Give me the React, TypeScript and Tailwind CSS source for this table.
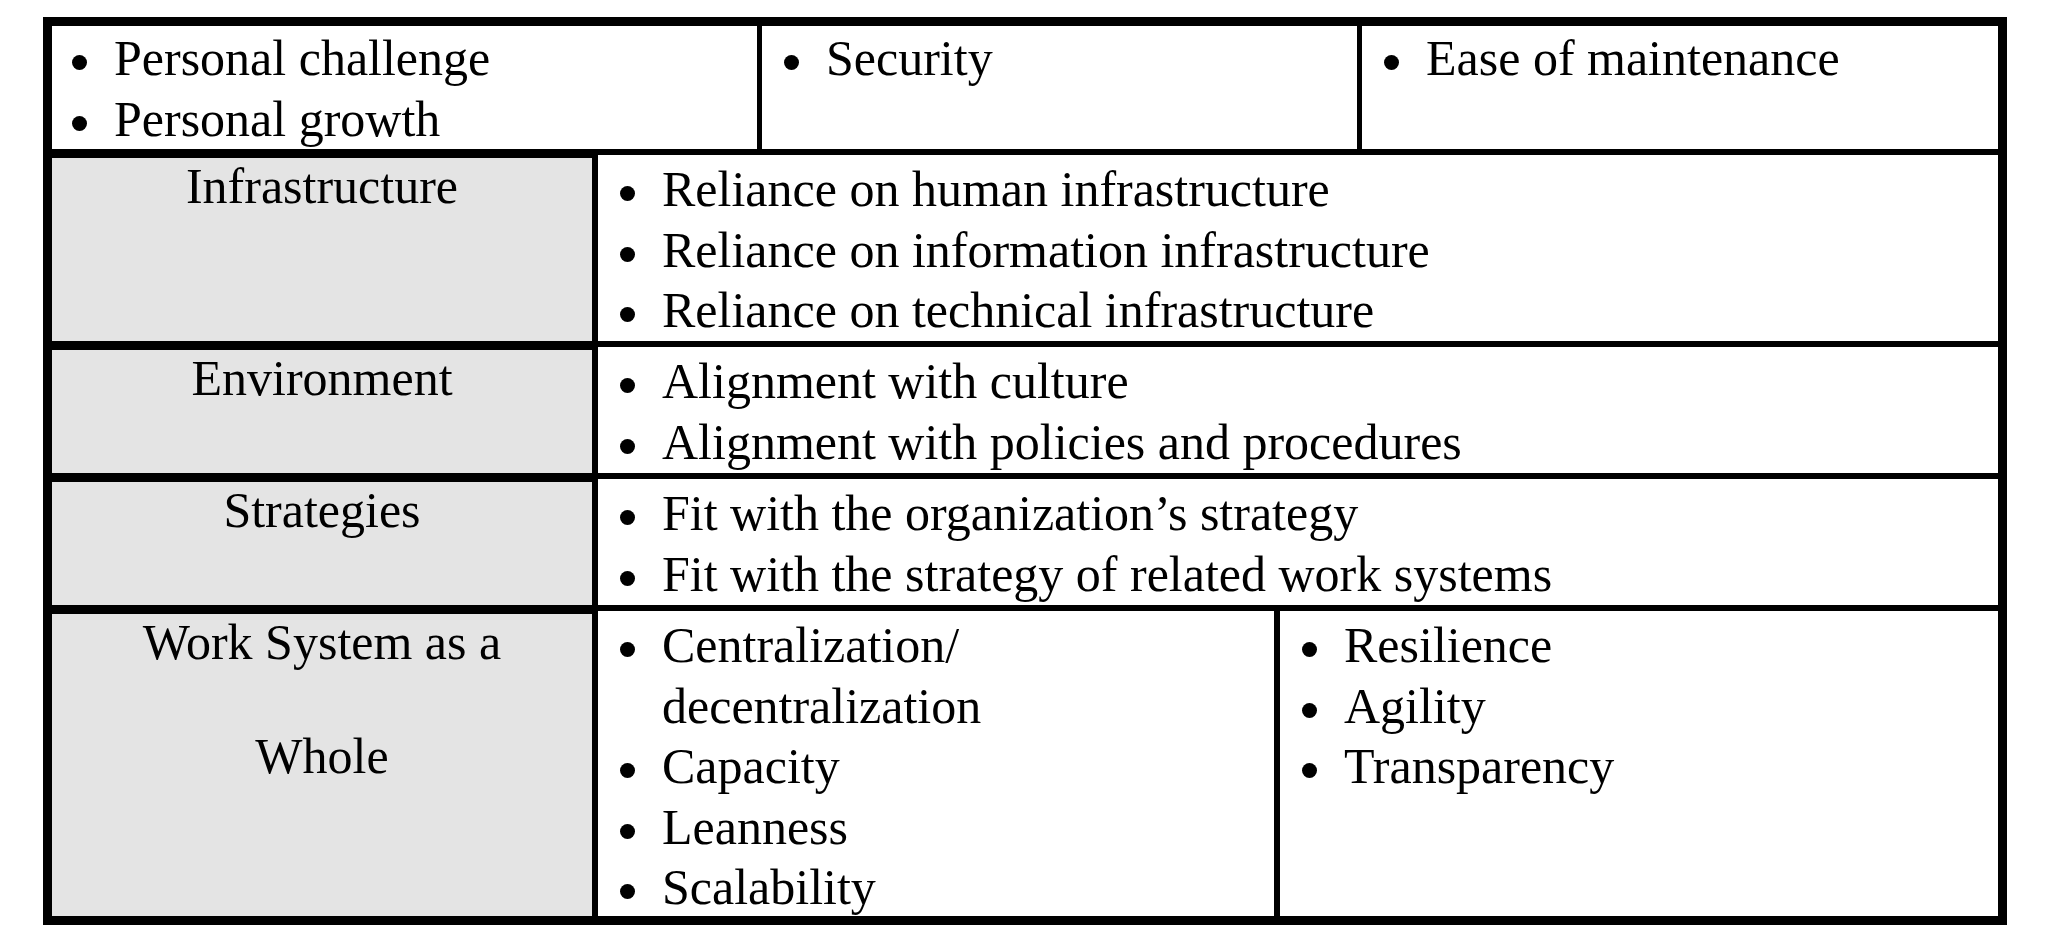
import type { ReactNode } from "react";

type Item = string | string[];

function Bullet() {
  return (
    <span className="flex w-[42px] shrink-0 pt-[27px]" aria-hidden="true">
      <span className="h-[15px] w-[15px] rounded-full bg-black" />
    </span>
  );
}

function BulletList({ items }: { items: Item[] }) {
  return (
    <ul>
      {items.map((item) => {
        const lines = Array.isArray(item) ? item : [item];
        return (
          <li key={lines.join(" ")} className="flex">
            <Bullet />
            <span className="whitespace-nowrap">
              {lines.map((line) => (
                <span key={line} className="block">
                  {line}
                </span>
              ))}
            </span>
          </li>
        );
      })}
    </ul>
  );
}

function Label({ children }: { children: ReactNode }) {
  return (
    <div className="w-[540px] shrink-0 border-t-[3px] border-black bg-[#e4e4e4] text-center leading-[56px]">
      {children}
    </div>
  );
}

export default function App() {
  return (
    <div className="min-h-screen bg-white pt-[17px] pl-[43px] font-['Liberation_Serif','Times_New_Roman',serif] text-[50px] text-black">
      <div className="w-[1964px] border-[9px] border-black">
        {/* top row */}
        <div className="flex h-[123px]">
          <div className="w-[705px] shrink-0 pl-[20px] pt-[2px] leading-[61px]">
            <BulletList items={["Personal challenge", "Personal growth"]} />
          </div>
          <div className="w-[600px] shrink-0 border-l-[5px] border-black pl-[22px] pt-[2px] leading-[61px]">
            <BulletList items={["Security"]} />
          </div>
          <div className="flex-1 border-l-[5px] border-black pl-[22px] pt-[2px] leading-[61px]">
            <BulletList items={["Ease of maintenance"]} />
          </div>
        </div>

        <div className="flex h-[192px] border-t-[6px] border-black">
          <Label>Infrastructure</Label>
          <div className="flex-1 border-l-[6px] border-black pl-[22px] pt-[4px] leading-[60.5px]">
            <BulletList
              items={[
                "Reliance on human infrastructure",
                "Reliance on information infrastructure",
                "Reliance on technical infrastructure",
              ]}
            />
          </div>
        </div>

        <div className="flex h-[132px] border-t-[6px] border-black">
          <Label>Environment</Label>
          <div className="flex-1 border-l-[6px] border-black pl-[22px] pt-[4px] leading-[60.5px]">
            <BulletList items={["Alignment with culture", "Alignment with policies and procedures"]} />
          </div>
        </div>

        <div className="flex h-[132px] border-t-[6px] border-black">
          <Label>Strategies</Label>
          <div className="flex-1 border-l-[6px] border-black pl-[22px] pt-[4px] leading-[60.5px]">
            <BulletList
              items={[
                "Fit with the organization\u2019s strategy",
                "Fit with the strategy of related work systems",
              ]}
            />
          </div>
        </div>

        <div className="flex h-[311px] border-t-[6px] border-black">
          <Label>
            <div>Work System as a</div>
            <div className="mt-[58px]">Whole</div>
          </Label>
          <div className="flex flex-1 border-l-[6px] border-black">
            <div className="w-[676px] shrink-0 pl-[22px] pt-[4px] leading-[60.5px]">
              <BulletList
                items={[
                  ["Centralization/", "decentralization"],
                  "Capacity",
                  "Leanness",
                  "Scalability",
                ]}
              />
            </div>
            <div className="flex-1 border-l-[6px] border-black pl-[22px] pt-[4px] leading-[60.5px]">
              <BulletList items={["Resilience", "Agility", "Transparency"]} />
            </div>
          </div>
        </div>
      </div>
    </div>
  );
}
